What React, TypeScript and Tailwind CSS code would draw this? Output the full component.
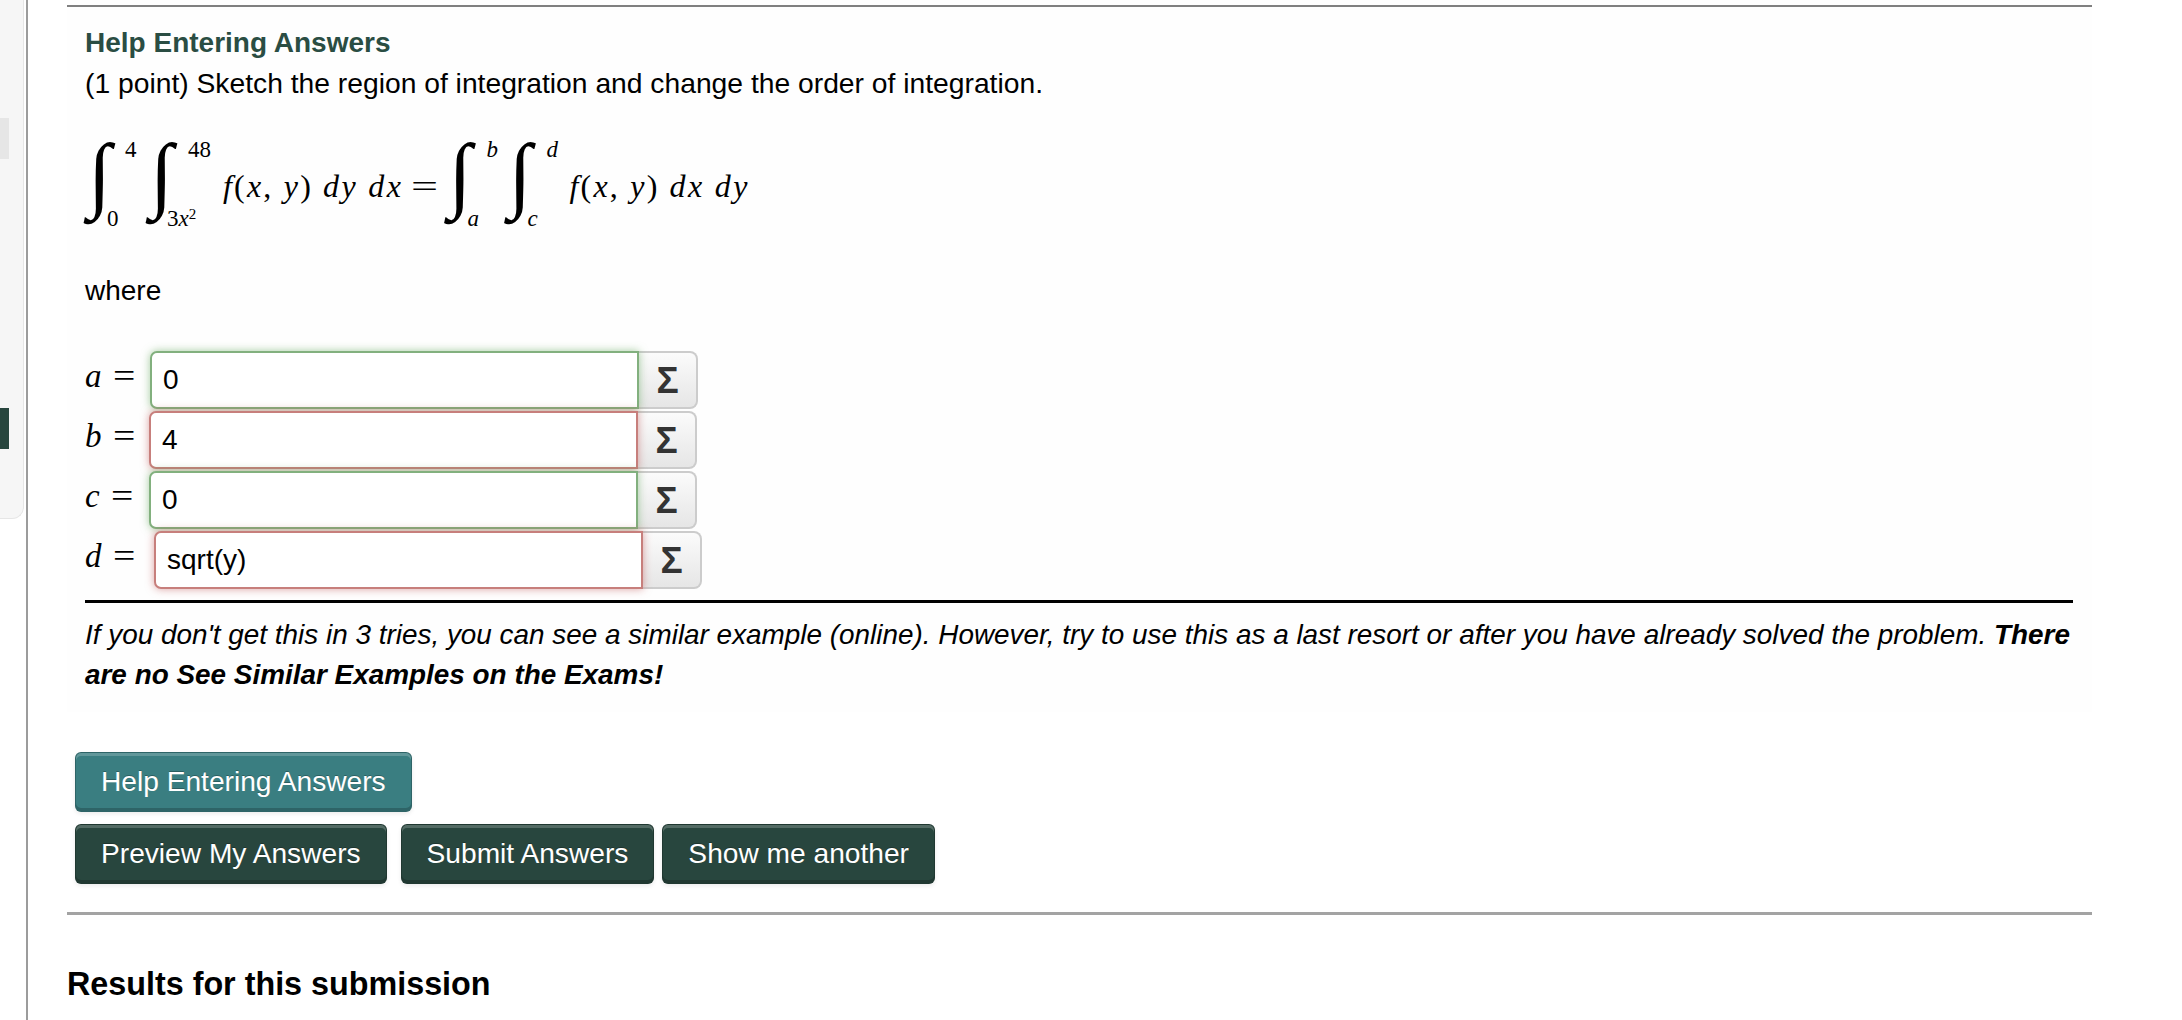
const sans = "font-['Liberation_Sans',Arial,sans-serif]";

const rows = [
  { name: 'a', value: '0', labelWidth: 'w-[65px]', wrap: 'h-[58px] mb-[2px]', box: 'border-[#82b07e] shadow-[0_0_9px_rgba(90,160,80,0.55)]' },
  { name: 'b', value: '4', labelWidth: 'w-[64px]', wrap: 'h-[58px] mb-[2px]', box: 'border-[#c77f7c] shadow-[0_0_9px_rgba(190,80,80,0.55)]' },
  { name: 'c', value: '0', labelWidth: 'w-[64px]', wrap: 'h-[58px] mb-[2px]', box: 'border-[#82b07e] shadow-[0_0_9px_rgba(90,160,80,0.55)]' },
  { name: 'd', value: 'sqrt(y)', labelWidth: 'w-[69px]', wrap: 'h-[58px]', box: 'border-[#c77f7c] shadow-[0_0_9px_rgba(190,80,80,0.55)]' },
];

function Integral({ sup, sub, supLeft, subLeft, className }: { sup: React.ReactNode; sub: React.ReactNode; supLeft: string; subLeft: string; className: string }) {
  return (
    <div className={`relative h-[86px] w-[36px] shrink-0 ${className}`}>
      <span className="absolute left-[1px] top-[-23px] text-[84px] leading-[108px] italic font-['Liberation_Serif',serif]">∫</span>
      <span className={`absolute top-[-6px] text-[23px] leading-[26px] ${supLeft}`}>{sup}</span>
      <span className={`absolute top-[63px] text-[23px] leading-[26px] ${subLeft}`}>{sub}</span>
    </div>
  );
}

function Equals({ className }: { className: string }) {
  return <span className={`inline-block origin-left ${className}`}>=</span>;
}

function AnswerRow({ row }: { row: (typeof rows)[number] }) {
  return (
    <div className={`flex items-stretch ${row.wrap}`}>
      <div className={`${row.labelWidth} flex items-center pb-[6px] font-['Liberation_Serif',serif] text-[33px]`}>
        <i>{row.name}</i>
        <Equals className="ml-[11px] scale-x-[1.2]" />
      </div>
      <div className={`relative z-10 flex w-[489px] items-center rounded-l-[7px] border-2 bg-white pl-[11px] text-[28px] ${row.box}`}>
        {row.value}
      </div>
      <div className="flex w-[59px] items-center justify-center rounded-r-[8px] border-2 border-l-0 border-[#cccccc] bg-gradient-to-b from-[#fbfbfb] to-[#e6e6e6] text-[37px] font-bold leading-none text-[#333333]">
        Σ
      </div>
    </div>
  );
}

const btn =
  'h-[60px] rounded-[6px] border border-black/20 px-[25px] text-[28.15px] text-white shadow-[inset_0_3px_0_rgba(255,255,255,0.2),inset_0_-3px_0_rgba(0,0,0,0.2),0_2px_4px_rgba(0,0,0,0.08)] [text-shadow:0_-1px_0_rgba(0,0,0,0.25)]';

export default function App() {
  return (
    <div className={`flex h-[1020px] w-[2182px] overflow-hidden bg-white text-black ${sans}`}>
      <div className="h-full w-[28px] shrink-0 border-r-2 border-[#9c9c9c]">
        <div className="h-[519px] w-[24px] rounded-br-[12px] border-r border-b border-[#e6e6e6] bg-[#f6f6f6] pt-[118px]">
          <div className="h-[41px] w-[9px] bg-[#e6e6e6]" />
          <div className="mt-[249px] h-[41px] w-[9px] bg-[#28463e]" />
        </div>
      </div>

      <div className="ml-[39px] w-[2025px] shrink-0 pt-[5px]">
        <div className="h-[707px] border-t-2 border-[#808080] bg-[#fefefe] pr-[19px] pl-[18px] pt-[16px]">
          <h2 className="text-[28px] font-bold leading-[40px] text-[#2a4d43]">Help Entering Answers</h2>
          <p className="text-[28.25px] leading-[40px]">(1 point) Sketch the region of integration and change the order of integration.</p>

          <div className="mt-[40px] flex h-[86px] items-center pl-[2px] font-['Liberation_Serif',serif] text-[32px]">
            <Integral sup="4" sub="0" supLeft="left-[38px]" subLeft="left-[20px]" className="mr-[26px]" />
            <Integral sup="48" sub={<>3<i>x</i><sup className="text-[15px]">2</sup></>} supLeft="left-[39px]" subLeft="left-[18px]" className="mr-[38px]" />
            <span className="whitespace-pre tracking-[2.2px]"><i>f</i>(<i>x</i>, <i>y</i>)</span>
            <span className="ml-[10px] tracking-[2.5px]"><i>dy</i></span>
            <span className="ml-[10px] tracking-[2.5px]"><i>dx</i></span>
            <Equals className="ml-[8px] scale-x-[1.5]" />
            <Integral sup={<i>b</i>} sub={<i>a</i>} supLeft="left-[39px]" subLeft="left-[20px]" className="ml-[18px] mr-[24px]" />
            <Integral sup={<i>d</i>} sub={<i>c</i>} supLeft="left-[39px]" subLeft="left-[20px]" className="mr-[26px]" />
            <span className="whitespace-pre tracking-[2.2px]"><i>f</i>(<i>x</i>, <i>y</i>)</span>
            <span className="ml-[10px] tracking-[2.5px]"><i>dx</i></span>
            <span className="ml-[10px] tracking-[2.5px]"><i>dy</i></span>
          </div>

          <p className="mt-[42px] text-[28px] leading-[40px]">where</p>

          <div className="mt-[40px]">
            {rows.map((row) => (
              <AnswerRow key={row.name} row={row} />
            ))}
          </div>

          <div className="mt-[11px] border-t-[3px] border-black pt-[12px] text-[27.9px] italic leading-[40px]">
            If you don't get this in 3 tries, you can see a similar example (online). However, try to use this as a last resort or after you have already solved the problem.{' '}
            <b>There are no See Similar Examples on the Exams!</b>
          </div>
        </div>

        <div className="mt-[40px] flex flex-col items-start gap-[12px] pl-[8px]">
          <button className={`${btn} bg-[#3a7e81]`}>Help Entering Answers</button>
          <div className="flex">
            <button className={`${btn} bg-[#28463e]`}>Preview My Answers</button>
            <button className={`${btn} ml-[14px] bg-[#28463e]`}>Submit Answers</button>
            <button className={`${btn} ml-[8px] bg-[#28463e]`}>Show me another</button>
          </div>
        </div>

        <hr className="mt-[28px] border-t-[3px] border-[#a3a3a3]" />

        <h3 className="mt-[47px] text-[32.3px] font-bold leading-[44px]">Results for this submission</h3>
      </div>
    </div>
  );
}
